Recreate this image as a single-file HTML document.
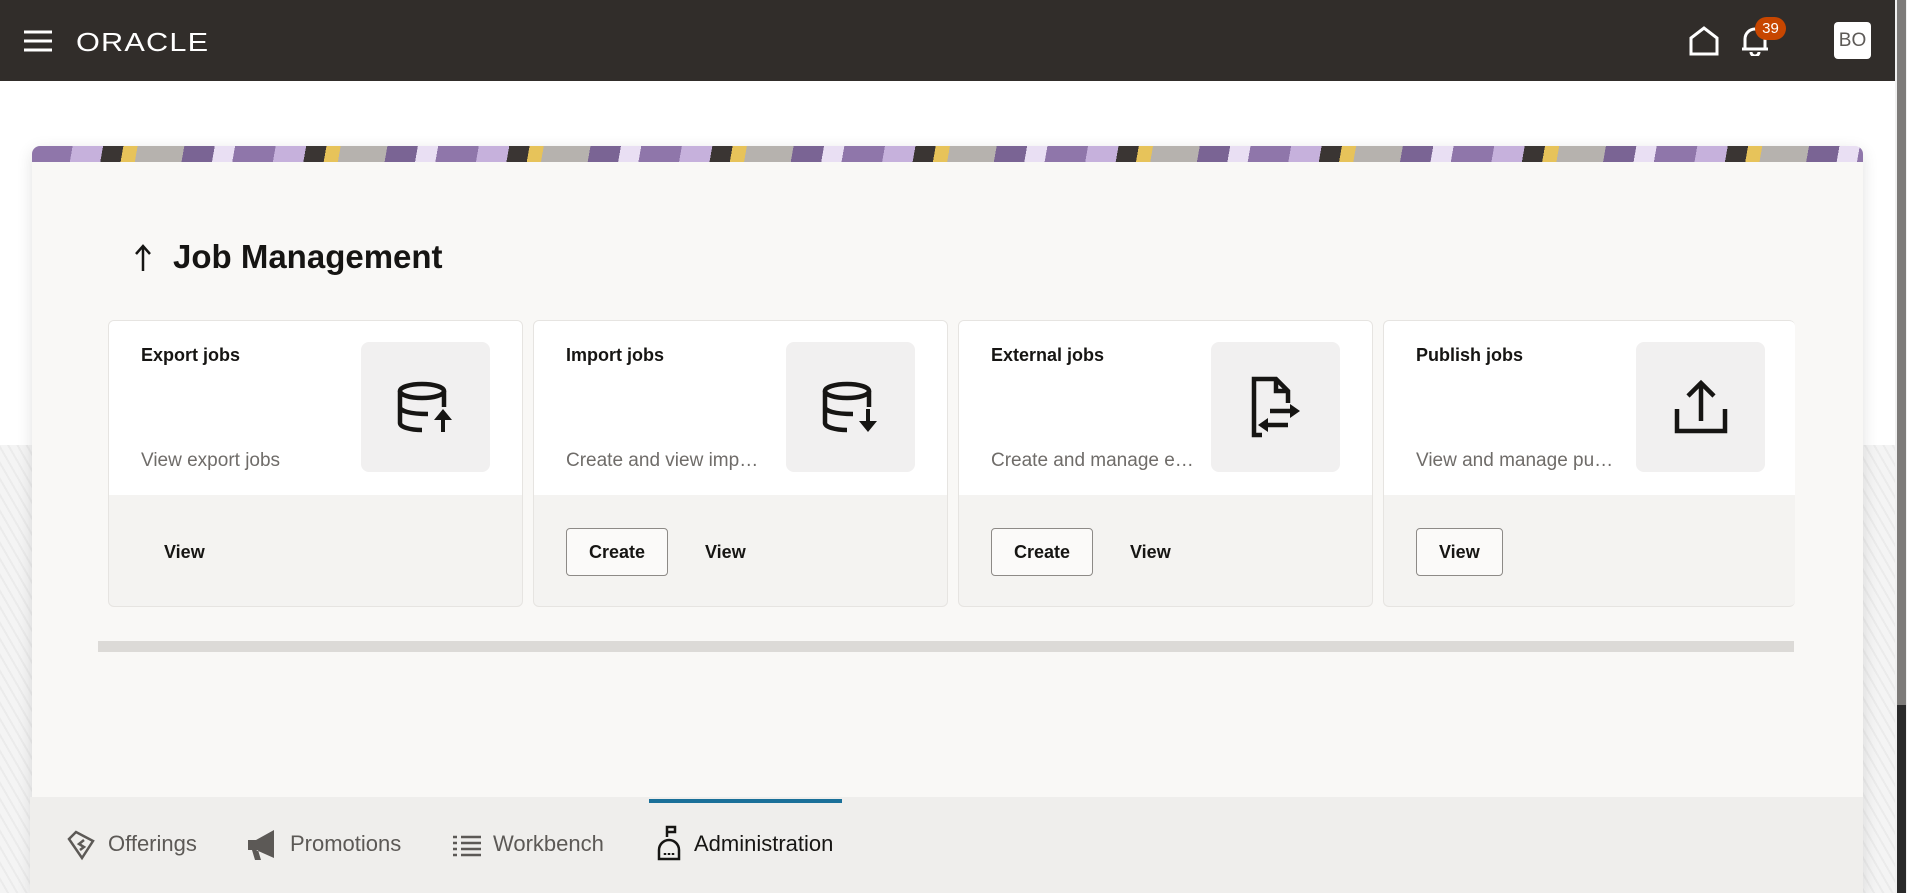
<!DOCTYPE html>
<html><head><meta charset="utf-8"><style>
*{box-sizing:border-box;margin:0;padding:0}
body{width:1907px;height:893px;overflow:hidden;background:#fff;font-family:"Liberation Sans",sans-serif;position:relative;color:#161513}
.hdr{position:absolute;left:0;top:0;width:1895px;height:81px;background:#312d2a}
.sb{position:absolute;right:0;top:0;width:12px;height:893px;background:#f0f0f0}
.sb div{position:absolute;left:2px;top:0;width:9px;height:705px;background:#7d7b79}
.sb div.b{top:705px;height:188px;background:#2a2a2a}
.bgpat{position:absolute;left:0;top:445px;width:1895px;height:448px;background:repeating-linear-gradient(60deg,#f4f4f4 0 6px,#ebebeb 6px 8px)}
.panel{position:absolute;left:32px;top:146px;width:1831px;height:747px;background:#f9f8f6;border-radius:8px 8px 0 0;box-shadow:0 4px 16px rgba(0,0,0,.12);overflow:hidden}
.banner{height:16px;background:repeating-linear-gradient(100deg,#8f76aa 0 40px,#c6b1dc 40px 70px,#3a3533 70px 90px,#e7c35a 90px 104px,#b6b2ae 104px 150px,#7a6494 150px 180px,#e9dff3 180px 200px)}
h1{position:absolute;left:173px;top:238px;font-size:33px;font-weight:bold}
.card{position:absolute;top:320px;width:415px;height:287px;border:1px solid #e6e4e1;border-radius:6px;background:#f4f3f1;overflow:hidden}
.card .top{height:174px;background:#fff;position:relative}
.card .t{position:absolute;left:32px;top:24px;font-size:18px;font-weight:bold}
.card .d{position:absolute;left:32px;top:129px;font-size:19px;color:#6f6c69}
.card .ic{position:absolute;left:252px;top:21px;width:129px;height:130px;background:#f1f0f0;border-radius:8px;display:flex;align-items:center;justify-content:center}
.btn{position:absolute;top:207px;height:48px;border:1px solid #8d8a87;border-radius:4px;font-size:18px;font-weight:bold;padding:0 22px;line-height:46px;background:#fbfaf9}
.lnk{position:absolute;top:207px;line-height:48px;font-size:18px;font-weight:bold}
.track{position:absolute;left:98px;top:641px;width:1696px;height:11px;background:#dcdad7}
.nav{position:absolute;left:30px;top:797px;width:1833px;height:96px;background:#efeeec}
.nav span{position:absolute;top:34px;font-size:22px;color:#5c5956}
.ul{position:absolute;left:649px;top:799px;width:193px;height:4px;background:#1a7099}
</style></head><body>
<div class="bgpat"></div>
<div class="hdr">
<svg style="position:absolute;left:24px;top:30px" width="28" height="22"><g stroke="#fff" stroke-width="3"><path d="M0 2H28M0 11H28M0 20H28"/></g></svg>
<div style="position:absolute;left:76px;top:27px;color:#fff;font-size:26px;letter-spacing:1px;transform:scaleX(1.18);transform-origin:left;font-weight:normal">ORACLE</div>
<svg style="position:absolute;left:1688px;top:26px" width="32" height="30"><path d="M3 28V12L16 2L29 12V28Z" fill="none" stroke="#fff" stroke-width="3"/></svg>
<svg style="position:absolute;left:1740px;top:26px" width="30" height="30"><path d="M5 23V13a10 10 0 0 1 20 0V23ZM2 23H28M11 26a4 4 0 0 0 8 0" fill="none" stroke="#fff" stroke-width="3"/></svg>
<div style="position:absolute;left:1755px;top:17px;width:31px;height:23px;border-radius:12px;background:#c74600;color:#fff;font-size:15px;text-align:center;line-height:23px">39</div>
<div style="position:absolute;left:1834px;top:22px;width:37px;height:37px;border-radius:4px;background:#fff;color:#5d5a57;font-size:19px;text-align:center;line-height:37px">BO</div>
</div>
<div class="sb"><div></div><div class="b"></div></div>
<div class="panel" style="width:1831px"><div class="banner"></div></div>
<h1>Job Management</h1>
<svg style="position:absolute;left:133px;top:244px" width="20" height="28"><path d="M10 27V3M3 10L10 2L17 10" fill="none" stroke="#161513" stroke-width="2.5"/></svg>

<div class="card" style="left:108px"><div class="top"><div class="t">Export jobs</div><div class="d">View export jobs</div><div class="ic"><svg width="60" height="60" viewBox="0 0 60 60"><g fill="none" stroke="#161513" stroke-width="4.5"><ellipse cx="26" cy="14" rx="22" ry="7"/><path d="M4 14V46c0 4 10 7 22 7M4 30c0 4 10 7 28 7M48 14V30"/></g><path d="M45 55V43H38L47 32L56 43H49V55Z" fill="#161513"/></svg></div></div><div class="lnk" style="left:55px">View</div></div>

<div class="card" style="left:533px"><div class="top"><div class="t">Import jobs</div><div class="d">Create and view imp…</div><div class="ic"><svg width="60" height="60" viewBox="0 0 60 60"><g fill="none" stroke="#161513" stroke-width="4.5"><ellipse cx="26" cy="14" rx="22" ry="7"/><path d="M4 14V46c0 4 10 7 22 7M4 30c0 4 10 7 28 7M48 14V30"/></g><path d="M45 32V44H38L47 55L56 44H49V32Z" fill="#161513"/></svg></div></div><div class="btn" style="left:32px">Create</div><div class="lnk" style="left:171px">View</div></div>

<div class="card" style="left:958px"><div class="top"><div class="t">External jobs</div><div class="d">Create and manage e…</div><div class="ic"><svg width="60" height="64" viewBox="0 0 60 64"><g fill="none" stroke="#161513" stroke-width="4.5"><path d="M16 60H8V4H30L42 16V28M30 4V16H42"/><path d="M24 36H48M18 50H42"/></g><path d="M44 29L54 36L44 43ZM22 43L12 50L22 57Z" fill="#161513"/></svg></div></div><div class="btn" style="left:32px">Create</div><div class="lnk" style="left:171px">View</div></div>

<div class="card" style="left:1383px;width:412px;border-right:none"><div class="top"><div class="t">Publish jobs</div><div class="d">View and manage pu…</div><div class="ic"><svg width="60" height="60" viewBox="0 0 60 60"><g fill="none" stroke="#161513" stroke-width="4.5"><path d="M6 32V54H54V32M30 44V6M17 19L30 6L43 19"/></g></svg></div></div><div class="btn" style="left:32px">View</div></div>

<div class="track"></div>
<div class="nav">
<svg style="position:absolute;left:36px;top:32px" width="30" height="32"><g fill="none" stroke="#5c5956" stroke-width="2.5"><path d="M3 10L10 3L27 12L16 29Z"/><path d="M18 11l-5 4l5 3l-4 3"/></g></svg>
<span style="left:78px">Offerings</span>
<svg style="position:absolute;left:216px;top:31px" width="30" height="34"><path d="M2 12H10L28 2V30L10 22H2ZM6 22L9 32H15L12 22" fill="#5c5956"/></svg>
<span style="left:260px">Promotions</span>
<svg style="position:absolute;left:423px;top:38px" width="28" height="22"><g stroke="#5c5956" stroke-width="2.5"><path d="M0 2H4M8 2H28M0 8H4M8 8H28M0 14H4M8 14H28M0 20H4M8 20H28"/></g></svg>
<span style="left:463px">Workbench</span>
<svg style="position:absolute;left:626px;top:28px" width="26" height="36"><g fill="none" stroke="#161513" stroke-width="2.5"><path d="M11 12V2H19V7H11M3 34V25a10 10 0 0 1 20 0V34ZM3 34H23"/><path d="M9 28V30M13 28V30M17 28V30"/></g></svg>
<span style="left:664px;color:#161513">Administration</span>
</div>
<div class="ul"></div>
</body></html>
